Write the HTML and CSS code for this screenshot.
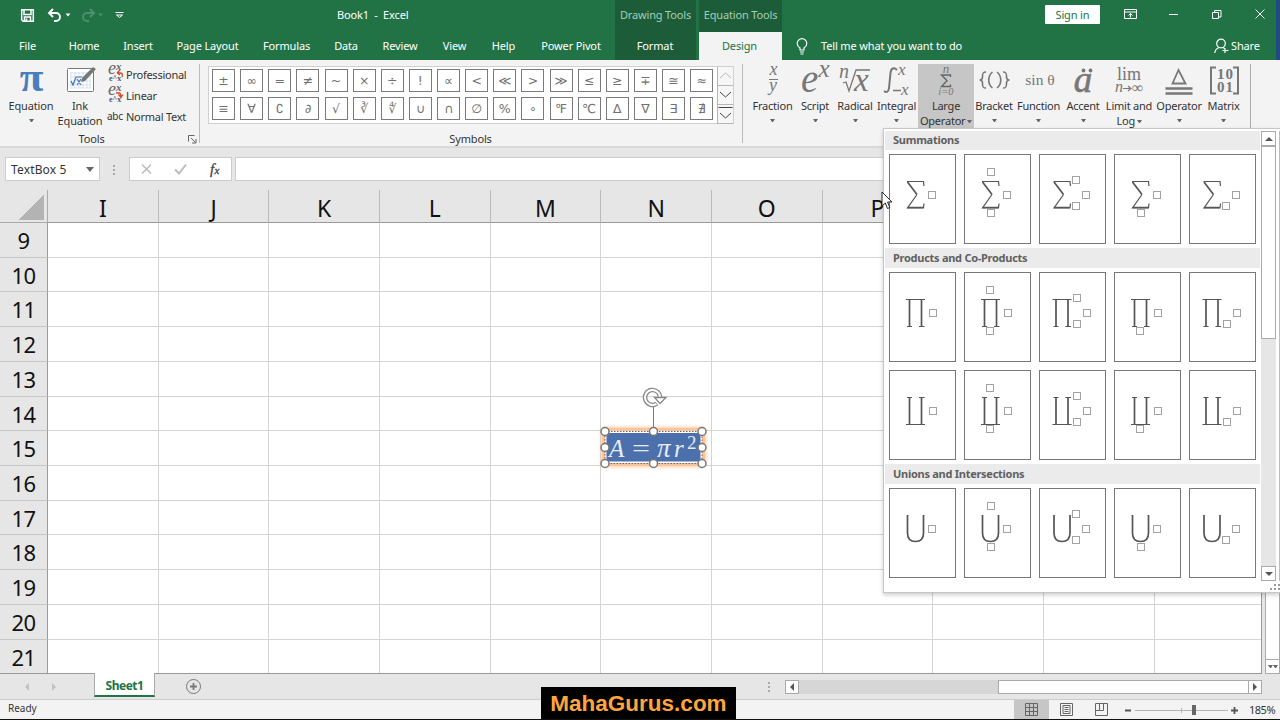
FILE: index.html
```
<!DOCTYPE html>
<html lang="en">
    <head>
        <meta charset="UTF-8" />
        <meta name="viewport" content="width=device-width, initial-scale=1.0" />
        <title>Book1 - Excel</title>
        <link rel="stylesheet" href="styles.css">
    </head>
    <body>
        <div class="app">
            <div class="title-bar">
                <div class="quick-access">
                    <svg width="100" height="20" viewBox="0 0 100 20" fill="none" stroke="#fff">
                        <path d="M1.7 4.7h11.6v11.6H3.2L1.7 14.8zM4 5v4.5h7V5M4.5 16v-4h6v4M6.5 16v-2.500" stroke-width="1.5" />
                        <path d="M33 4l-4 4 4 4M29.500 8H36a4 4 0 0 1 0 8h-2" stroke-width="1.9" />
                        <path d="M45.500 8.500h5l-2.500 3z" fill="#fff" stroke="none" />
                        <g opacity=".2">
                            <path d="M70 4l4 4-4 4M73.500 8H67a4 4 0 0 0 0 8h2" stroke-width="1.9" />
                            <path d="M78 8.500h5l-2.500 3z" fill="#fff" stroke="none" />
                        </g>
                    </svg>
                    <svg class="customize" width="9" height="8" viewBox="0 0 9 8" fill="none" stroke="#fff">
                        <path d="M.5 1.500h8M1.500 4l3 2.500 3-2.500z" />
                    </svg>
                </div>
                <div class="doc-title">Book1&nbsp; -&nbsp; Excel</div>
                <div class="context-title drawing">Drawing Tools</div>
                <div class="context-title equation">Equation Tools</div>
                <div class="window-controls">
                    <button class="sign-in">Sign in</button>
                    <svg width="150" height="20" viewBox="0 0 150 20" fill="none" stroke="#fff">
                        <path d="M5.500 4.500h12v9h-12zM5.500 7h12M11.500 12.500V8.500M9.500 10.500l2-2 2 2" />
                        <path d="M50 9.500h9" />
                        <path d="M93.500 7.500h6v6h-6zM95.500 7V5.500h6.500V12h-2" />
                        <path d="M136.500 4.500l9 9M145.500 4.500l-9 9" />
                    </svg>
                </div>
            </div>

            <div class="tabs">
                <div class="tab file">File</div>
                <div class="tab home">Home</div>
                <div class="tab insert">Insert</div>
                <div class="tab layout">Page Layout</div>
                <div class="tab formulas">Formulas</div>
                <div class="tab data">Data</div>
                <div class="tab review">Review</div>
                <div class="tab view">View</div>
                <div class="tab help">Help</div>
                <div class="tab pivot">Power Pivot</div>
                <div class="tab format">Format</div>
                <div class="tab design">Design</div>
                <div class="tell-me">
                    <svg width="12" height="17" viewBox="0 0 12 17" fill="none" stroke="#fff" stroke-width="1.2">
                        <path d="M4 12v-2C2.500 9 1.200 7.500 1.200 5.500a4.800 4.800 0 0 1 9.600 0C10.800 7.500 9.500 9 8 10v2zM4 14h4M4.500 16h3" />
                    </svg>
                    <span>Tell me what you want to do</span>
                </div>
                <div class="share">
                    <svg width="15" height="16" viewBox="0 0 15 16" fill="none" stroke="#fff" stroke-width="1.2">
                        <circle cx="7" cy="5.500" r="4.300" />
                        <path d="M.8 15c.2-3 2-4.500 4-5.500M9 9.500l1.500 1M11 10v5M8.500 12.500h6" />
                    </svg>
                    <span>Share</span>
                </div>
            </div>

            <div class="ribbon">
                <div class="tools-group">
                    <div class="tools">
                        <div class="big-button equation-button">
                            <svg width="36" height="32" viewBox="0 0 36 32">
                                <text x="18.500" y="27" text-anchor="middle" class="pi">π</text>
                            </svg>
                            <span>Equation</span>
                            <i class="caret"></i>
                        </div>
                        <div class="big-button ink-button">
                            <svg width="36" height="32" viewBox="0 0 36 32" fill="none">
                                <rect x="5.500" y="4.500" width="26" height="23" rx="1" fill="#fff" stroke="#777" />
                                <path d="M9 8v16M13 8v16M17 8v16M21 8v16M25 8v16M28 8v16M8 9h21M8 13h21M8 17h21M8 21h21M8 24h21" stroke="#c9d8ec" stroke-width=".7" />
                                <path d="M9 17l2 4 3-8h6M15 15l4 6M19 15l-4 6" stroke="#3d72b8" stroke-width="1.200" />
                                <path d="M19 18l1-4L31 3l3 2-11 12z" fill="#777" />
                            </svg>
                            <span>Ink</span>
                            <span>Equation</span>
                        </div>
                        <div class="small-buttons">
                            <div class="small-button">
                                <svg width="18" height="18" viewBox="0 0 18 18">
                                    <text x="1" y="10" class="e-glyph">e</text>
                                    <text x="9" y="6" class="x-glyph">x</text>
                                    <text x="2" y="17" class="tiny-glyph">e^x</text>
                                    <path d="M10 9l3-3M10 9h3c2 0 3 1 2 4M10 9l3 2" fill="none" stroke="#d04a28" stroke-width="1.300" />
                                </svg>
                                <span>Professional</span>
                            </div>
                            <div class="small-button">
                                <svg width="18" height="18" viewBox="0 0 18 18">
                                    <text x="1" y="10" class="e-glyph">e</text>
                                    <text x="9" y="6" class="x-glyph">x</text>
                                    <text x="2" y="17" class="tiny-glyph">e^x</text>
                                    <path d="M9 8h3q2 0 2 4M11.500 9.500l2.500 3 2-3" fill="none" stroke="#d04a28" stroke-width="1.300" />
                                </svg>
                                <span>Linear</span>
                            </div>
                            <div class="small-button"><span class="abc">abc</span><span>Normal Text</span></div>
                        </div>
                    </div>
                    <div class="group-label">
                        <span>Tools</span>
                        <svg class="launcher" width="9" height="9" viewBox="0 0 9 9" fill="none" stroke="#666">
                            <path d="M.5 6.500v-6h6M3 3l4.500 4.500M8 4v4H4" />
                        </svg>
                    </div>
                </div>
                <div class="symbols-group">
                    <div class="gallery">
                        <div class="symbol-grid" id="symbolGrid"></div>
                        <div class="gallery-scroll">
                            <svg class="dim" width="15" height="18" viewBox="0 0 15 18"><path d="M2 11l5.500-5 5.500 5" /></svg>
                            <svg width="15" height="18" viewBox="0 0 15 18"><path d="M2 6l5.500 5 5.500-5" /></svg>
                            <svg width="15" height="18" viewBox="0 0 15 18"><path d="M.5 2.500h14M2 8l5.500 5L13 8" /></svg>
                        </div>
                    </div>
                    <div class="group-label"><span>Symbols</span></div>
                </div>
                <div class="structures">
                    <div class="structure fraction">
                        <svg width="44" height="34" viewBox="0 0 44 34">
                            <text x="22.500" y="11" font-size="18" text-anchor="middle" class="math">x</text>
                            <path d="M18 15.500h9" stroke="#777" />
                            <text x="22" y="27" font-size="18" text-anchor="middle" class="math">y</text>
                        </svg>
                        <span>Fraction</span><i class="caret"></i>
                    </div>
                    <div class="structure script">
                        <svg width="44" height="34" viewBox="0 0 44 34">
                            <text x="8" y="28" font-size="39" class="math">e</text>
                            <text x="25.500" y="13" font-size="25" class="math">x</text>
                        </svg>
                        <span>Script</span><i class="caret"></i>
                    </div>
                    <div class="structure radical">
                        <svg width="44" height="34" viewBox="0 0 44 34">
                            <text x="6" y="14" font-size="20" class="math">n</text>
                            <text x="21" y="27" font-size="33" class="math">x</text>
                            <path d="M10 19l3-1 3 9 7-21h14" fill="none" stroke="#777" stroke-width="1.300" />
                        </svg>
                        <span>Radical</span><i class="caret"></i>
                    </div>
                    <div class="structure integral">
                        <svg width="44" height="34" viewBox="0 0 44 34">
                            <path d="M22 6c-3-3-6-2-6.500 3L14 24c-.5 4-2.500 5-5 3" fill="none" stroke="#777" stroke-width="2" />
                            <text x="23" y="11" font-size="17" class="math">x</text>
                            <path d="M18 26.500h8" stroke="#777" stroke-width="1.500" />
                            <text x="26" y="31" font-size="17" class="math">x</text>
                        </svg>
                        <span>Integral</span><i class="caret"></i>
                    </div>
                    <div class="structure large-operator active">
                        <svg width="44" height="34" viewBox="0 0 44 34">
                            <text x="22" y="9" font-size="13" text-anchor="middle" class="math">n</text>
                            <path d="M26.500 13v-2H17.500l5.500 5.800-5.500 5.700h9v-2" fill="none" stroke="#666" stroke-width="1.400" />
                            <text x="22" y="31" font-size="10.500" text-anchor="middle" class="math">i=0</text>
                        </svg>
                        <span>Large</span><span>Operator <i class="caret inline"></i></span>
                    </div>
                    <div class="structure bracket">
                        <svg width="44" height="34" viewBox="0 0 44 34" fill="none" stroke="#777" stroke-width="1.600">
                            <path d="M14 8c-3 0-3.500 1-3.500 4v1c0 2-1 3-3 3 2 0 3 1 3 3v1c0 3 .5 4 3.500 4M31 8c3 0 3.500 1 3.500 4v1c0 2 1 3 3 3-2 0-3 1-3 3v1c0 3-.5 4-3.500 4M20.500 8c-5 4-5 12 0 16M25 8c5 4 5 12 0 16" />
                        </svg>
                        <span>Bracket</span><i class="caret"></i>
                    </div>
                    <div class="structure function">
                        <svg width="44" height="34" viewBox="0 0 44 34">
                            <text x="23" y="21" font-size="15.500" text-anchor="middle" class="upright">sin θ</text>
                        </svg>
                        <span>Function</span><i class="caret"></i>
                    </div>
                    <div class="structure accent">
                        <svg width="44" height="34" viewBox="0 0 44 34">
                            <text x="22" y="28" font-size="37" text-anchor="middle" class="math thick">a</text>
                            <circle cx="22.500" cy="6.500" r="1.900" fill="#777" />
                            <circle cx="29.500" cy="6.500" r="1.900" fill="#777" />
                        </svg>
                        <span>Accent</span><i class="caret"></i>
                    </div>
                    <div class="structure limit">
                        <svg width="44" height="34" viewBox="0 0 44 34">
                            <text x="22" y="16" font-size="18" text-anchor="middle" class="upright">lim</text>
                            <text x="8" y="28" font-size="16" class="math">n</text>
                            <path d="M16 24.500h8M21 22l3 2.500-3 2.500" fill="none" stroke="#777" stroke-width="1.200" />
                            <text x="25" y="29" font-size="16" class="upright">∞</text>
                        </svg>
                        <span>Limit and</span><span>Log <i class="caret inline"></i></span>
                    </div>
                    <div class="structure operator">
                        <svg width="44" height="34" viewBox="0 0 44 34" fill="none" stroke="#777">
                            <path d="M15.500 19.500L21.500 6l7 13.500z" stroke-width="1.800" />
                            <path d="M8.500 24.500h27M8.500 29.500h27" stroke-width="2.500" />
                        </svg>
                        <span>Operator</span><i class="caret"></i>
                    </div>
                    <div class="structure matrix">
                        <svg width="44" height="34" viewBox="0 0 44 34">
                            <path d="M14 3.500H9v26h5M31 3.500h5v26h-5" fill="none" stroke="#777" stroke-width="2" />
                            <text x="15" y="15" font-size="15" class="upright bold">1</text>
                            <text x="23.500" y="15" font-size="15" class="upright bold">0</text>
                            <text x="15" y="27.500" font-size="15" class="upright bold">0</text>
                            <text x="23.500" y="27.500" font-size="15" class="upright bold">1</text>
                        </svg>
                        <span>Matrix</span><i class="caret"></i>
                    </div>
                </div>
            </div>

            <div class="formula-bar">
                <div class="name-box"><span>TextBox 5</span><i class="caret wide"></i></div>
                <div class="dots"><i></i><i></i><i></i></div>
                <div class="formula-buttons">
                    <svg width="100" height="22" viewBox="0 0 100 22" fill="none">
                        <path d="M12 6.500l9 9M21 6.500l-9 9" stroke="#bbb" stroke-width="1.500" />
                        <path d="M45 11.500l4 4 7-9" stroke="#bbb" stroke-width="2" />
                        <text x="80" y="15.500" font-size="15" class="math dark">f</text>
                        <text x="84.500" y="16" font-size="11" class="math dark">x</text>
                    </svg>
                </div>
                <div class="formula-input"></div>
            </div>

            <div class="sheet-area">
                <div class="sheet" id="sheet"></div>
                <div class="sheet-scroll"><div class="scroll-end"><i class="caret"></i><i class="caret"></i></div></div>
            </div>

            <div class="sheet-tabs">
                <div class="sheet-nav"><i class="arrow left"></i><i class="arrow right"></i></div>
                <div class="sheet-tab">Sheet1</div>
                <svg class="add-sheet" width="17" height="17" viewBox="0 0 17 17" fill="none" stroke="#777">
                    <circle cx="8.500" cy="8.500" r="7" />
                    <path d="M8.500 5v7M5 8.500h7" stroke-width="1.800" />
                </svg>
                <div class="dots"><i></i><i></i><i></i></div>
                <div class="h-scroll">
                    <div class="h-button"><i class="arrow left"></i></div>
                    <div class="h-thumb"></div>
                    <div class="h-button"><i class="arrow right"></i></div>
                </div>
            </div>

            <div class="status-bar">
                <span class="ready">Ready</span>
                <div class="view-buttons">
                    <div class="view-button on">
                        <svg width="13" height="13" viewBox="0 0 13 13"><path d="M.5.5h12v12H.5zM4.500.5v12M8.500.5v12M.5 4.500h12M.5 8.500h12" /></svg>
                    </div>
                    <div class="view-button">
                        <svg width="13" height="13" viewBox="0 0 13 13"><path d="M.5.5h12v12H.5zM3 2.500h7v8H3zM4.500 4.500h4M4.500 6.500h4M4.500 8.500h4" /></svg>
                    </div>
                    <div class="view-button">
                        <svg width="13" height="13" viewBox="0 0 13 13"><path d="M.5.5h12v12H.5zM4.500.5v7M8.500.5v7M.5 7.500h8" /></svg>
                    </div>
                </div>
                <svg class="zoom-slider" width="116" height="14" viewBox="0 0 116 14" fill="none">
                    <path d="M2 7.500h6" stroke="#555" stroke-width="2" />
                    <path d="M12 7.500h93M58.500 5v5" stroke="#b5b5b5" />
                    <path d="M71 2v10" stroke="#666" stroke-width="4" />
                    <path d="M108 7.500h7M111.500 4v7" stroke="#555" stroke-width="1.800" />
                </svg>
                <span class="zoom-level">185%</span>
            </div>

            <div class="equation-box">
                <svg width="110" height="90" viewBox="0 0 110 90">
                    <path d="M56.500 27v20" stroke="#777" />
                    <path d="M60 23.500A7.500 7.500 0 1 1 63 18" fill="none" stroke="#888" stroke-width="4.500" />
                    <path d="M59.500 23.800A7.500 7.500 0 1 1 63 18" fill="none" stroke="#fff" stroke-width="2" />
                    <path d="M57.500 17.500h11.500l-6 6z" fill="#fff" stroke="#888" stroke-width="1.300" />
                    <rect class="glow" x="5" y="48" width="103" height="38" rx="3" />
                    <rect x="8" y="51" width="97" height="32" fill="#fff" />
                    <rect x="9.500" y="53" width="94" height="28.500" fill="#4c70ab" />
                    <rect x="8" y="51.500" width="97" height="32" fill="none" stroke="#666" stroke-dasharray="1.500 1.500" />
                    <g class="formula" font-size="25">
                        <text x="12" y="77">A</text>
                        <text x="35" y="77" class="plain" textLength="18" lengthAdjust="spacingAndGlyphs">=</text>
                        <text x="60" y="77" font-size="27">π</text>
                        <text x="77" y="77">r</text>
                        <text x="90" y="69" font-size="19" class="plain">2</text>
                    </g>
                    <g fill="#fff" stroke="#777" stroke-width="1.500">
                        <circle cx="8" cy="51.500" r="4" /><circle cx="56.500" cy="51.500" r="4" /><circle cx="105" cy="51.500" r="4" />
                        <circle cx="8" cy="67.500" r="4" /><circle cx="105" cy="67.500" r="4" />
                        <circle cx="8" cy="83.500" r="4" /><circle cx="56.500" cy="83.500" r="4" /><circle cx="105" cy="83.500" r="4" />
                    </g>
                </svg>
            </div>

            <div class="operator-menu">
                <div class="menu-body">
                    <div class="menu-list">
                        <div class="menu-heading">Summations</div>
                        <div class="menu-row" data-operator="sum"></div>
                        <div class="menu-heading">Products and Co-Products</div>
                        <div class="menu-row" data-operator="prod"></div>
                        <div class="menu-row second" data-operator="coprod"></div>
                        <div class="menu-heading">Unions and Intersections</div>
                        <div class="menu-row" data-operator="union"></div>
                    </div>
                    <div class="menu-scroll">
                        <div class="menu-button"><i class="arrow up"></i></div>
                        <div class="menu-thumb"></div>
                        <div class="menu-button last"><i class="arrow down"></i></div>
                    </div>
                    <div class="menu-edge"></div>
                </div>
                <svg class="grip" width="14" height="8" viewBox="0 0 14 8" fill="#999">
                    <path d="M8 0h2v2H8zM12 0h2v2h-2zM4 4h2v2H4zM8 4h2v2H8zM12 4h2v2h-2z" />
                </svg>
            </div>

            <svg class="pointer" width="13" height="20" viewBox="0 0 13 20">
                <path d="M1 1v14l3.300-3 2.200 5.500 2.300-1L6.600 11H11z" fill="#fff" stroke="#222" />
            </svg>
            <div class="watermark">MahaGurus.com</div>
        </div>

        <script>
            const symbols = "± ∞ = ≠ ~ × ÷ ! ∝ < ≪ > ≫ ≤ ≥ ∓ ≅ ≈ ≡ ∀ ∁ ∂ √ ∛ ∜ ∪ ∩ ∅ % ∘ ℉ ℃ ∆ ∇ ∃ ∄".split(" ");
            const columns = ["I", "J", "K", "L", "M", "N", "O", "P", "Q", "R", "S"];

            // Thin outline, heavier strokes and placeholder offset for each operator
            const operators = {
                sum: { path: "M35 32l-.5-4.500H18M28 40.500L18.500 54h16l.5-4.500", heavy: "M18.500 28L28 40.500M18.500 53.500H34", shift: 0 },
                prod: { path: "M17 27.500h19M18 54.500h5M30 54.500h5.500", heavy: "M20.500 27.500v27M32.500 27.500v27", shift: 1 },
                coprod: { path: "M18 27.500h5M30 27.500h5.500M17 54.500h19", heavy: "M20.500 27.500v27M32.500 27.500v27", shift: 1 },
                union: { path: "", heavy: "M18.500 27v18c0 6 3 8.500 8 8.500s8-2.500 8-8.500V27", shift: 0 },
            };

            // Each layout: glyph offset, then the placeholder squares
            const layouts = [
                { dx: 0, boxes: [[39, 37]] },
                { dx: 0, boxes: [[39, 37], [23, 14], [23, 55]] },
                { dx: -3.5, boxes: [[43, 37], [33, 22], [33, 48]] },
                { dx: 0, boxes: [[39, 37], [23, 55]] },
                { dx: -3.5, boxes: [[43, 37], [33, 48]] },
            ];

            function buildSymbols() {
                const grid = document.getElementById("symbolGrid");
                symbols.forEach((symbol) => {
                    const cell = document.createElement("div");
                    cell.className = "symbol";
                    cell.textContent = symbol;
                    grid.appendChild(cell);
                });
            }

            function buildSheet() {
                let html = '<div class="corner"></div>';
                columns.forEach((name) => (html += `<div class="column-head">${name}</div>`));
                for (let row = 9; row <= 21; row++) {
                    html += `<div class="row-head">${row}</div>`;
                    columns.forEach(() => (html += '<div class="cell"></div>'));
                }
                document.getElementById("sheet").innerHTML = html;
            }

            function buildMenu() {
                document.querySelectorAll(".menu-row").forEach((row) => {
                    const op = operators[row.dataset.operator];
                    row.innerHTML = layouts
                        .map((layout) => {
                            const boxes = layout.boxes
                                .map(([x, y]) => {
                                    const shift = x === 23 ? -op.shift : op.shift;
                                    return `<rect x="${x + shift - 0.5}" y="${y - 0.5}" width="7" height="7" />`;
                                })
                                .join("");
                            return `<svg class="menu-item" width="67" height="90" viewBox="0 0 65 88">
                                <g transform="translate(${layout.dx - 1} -1)"><path d="${op.path}" />
                                <path class="heavy" d="${op.heavy}" /></g>${boxes}</svg>`;
                        })
                        .join("");
                });
            }

            buildSymbols();
            buildSheet();
            buildMenu();
        </script>
    </body>
</html>
```
FILE: styles.css
```
* {
    margin: 0;
    padding: 0;
    box-sizing: border-box;
}
body {
    font-family: "Noto Sans", "Open Sans", sans-serif;
    font-size: 11px;
    letter-spacing: -0.15px;
    color: #333;
    overflow: hidden;
}
svg {
    display: block;
    flex: none;
    overflow: visible;
    letter-spacing: 0;
}

.app {
    position: relative;
    display: flex;
    flex-direction: column;
    width: 1280px;
    height: 720px;
    overflow: hidden;
    background: #e6e6e6;
    border-bottom: 1px solid #111;
}
.app > div {
    flex: none;
}

/* Title bar and tabs */
.title-bar {
    display: flex;
    height: 32px;
    background: #217346;
    border-right: 4px solid #214a80;
    color: #fff;
    line-height: 30px;
    white-space: nowrap;
}
.quick-access {
    display: flex;
    width: 337px;
    padding: 5px 0 0 20px;
}
.customize {
    margin: 6px 0 0 -5px;
}
.doc-title {
    width: 278px;
}
.context-title {
    background: #1c5c39;
    color: #a3cfb6;
    text-align: center;
}
.context-title.drawing {
    width: 81px;
    margin-right: 3px;
}
.context-title.equation {
    width: 83px;
}
.window-controls {
    display: flex;
    gap: 19px;
    padding: 5px 0 0 263px;
}
.sign-in {
    width: 55px;
    height: 19px;
    border: none;
    border-radius: 1px;
    background: #fff;
    color: #217346;
    font: inherit;
    letter-spacing: inherit;
    line-height: 19px;
}
.tabs {
    display: flex;
    height: 28px;
    background: #217346;
    border-right: 4px solid #214a80;
    color: #fff;
    line-height: 27px;
    white-space: nowrap;
}
.tab {
    text-align: center;
}
.file { width: 55px; }
.home { width: 58px; }
.insert { width: 50px; }
.layout { width: 89px; }
.formulas { width: 69px; }
.data { width: 50px; }
.review { width: 58px; }
.view { width: 51px; }
.help { width: 47px; }
.pivot { width: 88px; }
.format {
    width: 81px;
    margin-right: 3px;
    padding-right: 1px;
    background: #1c5c39;
}
.design {
    width: 83px;
    padding-right: 2px;
    background: #f3f3f3;
    color: #217346;
}
.tell-me {
    display: flex;
    gap: 13px;
    width: 432px;
    padding-left: 14px;
}
.tell-me svg,
.share svg {
    margin-top: 6px;
}
.share {
    display: flex;
    gap: 2px;
}

/* Ribbon */
.ribbon {
    display: flex;
    height: 88px;
    padding-top: 4px;
    background: #f3f3f3;
    border-bottom: 2px solid #d9d9d9;
    line-height: 15px;
    white-space: nowrap;
}
.tools-group {
    width: 200px;
    height: 79px;
    border-right: 1px solid #bbb;
}
.tools {
    display: flex;
    height: 67px;
}
.big-button {
    display: flex;
    flex-direction: column;
    align-items: center;
}
.big-button svg {
    margin-bottom: 2px;
}
.equation-button {
    width: 62px;
}
.ink-button {
    width: 36px;
}
.pi {
    font: bold 43px "Liberation Serif", serif;
    fill: #4a7ebb;
}
.caret {
    display: block;
    width: 5px;
    margin: 6px auto 0;
    border: 2.5px solid transparent;
    border-top: 3px solid #666;
    border-bottom: none;
}
.caret.inline {
    display: inline-block;
    margin: 0 0 0 -1px;
    vertical-align: 2px;
}
.caret.wide {
    margin: 0;
    border-width: 5px 4px 0;
}
.small-buttons {
    padding-left: 9px;
}
.small-button {
    display: flex;
    align-items: center;
    gap: 1px;
    height: 21.5px;
    margin-top: -0.5px;
    letter-spacing: -0.25px;
}
.small-button svg {
    margin: -2px 0 0;
}
.e-glyph {
    font: italic 18px "Liberation Serif", serif;
    fill: #666;
}
.x-glyph {
    font: italic bold 11px "Liberation Serif", serif;
    fill: #666;
}
.tiny-glyph {
    font: bold 8px "Liberation Serif", serif;
    fill: #555;
}
.abc {
    width: 18px;
    font-size: 10px;
}
.group-label {
    position: relative;
    height: 16px;
    text-align: center;
}
.tools-group .group-label {
    padding-right: 16px;
}
.launcher {
    position: absolute;
    top: 4px;
    right: 2px;
}
.symbols-group {
    width: 543px;
    height: 79px;
    padding: 2px 9px 0 8px;
    border-right: 1px solid #bbb;
}
.gallery {
    display: flex;
    width: 526px;
    height: 58px;
    margin-bottom: 7px;
    border: 1px solid #d0d0d0;
    background: #fff;
}
.symbol-grid {
    display: grid;
    grid-template-columns: repeat(18, 28.13px);
    grid-template-rows: 28px 28px;
    width: 508px;
    padding: 2px 0 0 3px;
}
.symbol {
    width: 23px;
    height: 23px;
    border: 1px solid #7a7a7a;
    color: #707070;
    font: 12.5px/21px "DejaVu Sans", sans-serif;
    letter-spacing: 0;
    text-align: center;
}
.gallery-scroll {
    display: flex;
    flex-direction: column;
    width: 16px;
    background: #f6f6f6;
}
.gallery-scroll svg {
    width: 16px;
    height: 19px;
    border: 1px solid #b5b5b5;
    border-width: 0 0 1px 1px;
    fill: none;
    stroke: #444;
}
.gallery-scroll .dim {
    stroke: #bbb;
}
.structures {
    display: flex;
    width: 508px;
    height: 79px;
    padding-left: 7px;
    border-right: 1px solid #aaa;
}
.structure {
    display: flex;
    flex-direction: column;
    align-items: center;
    height: 64px;
}
.fraction { width: 45px; }
.script, .radical { width: 40px; }
.integral { width: 43px; }
.large-operator { width: 56px; }
.bracket { width: 40px; }
.function { width: 49px; }
.accent { width: 40px; }
.limit { width: 52px; }
.operator { width: 48px; }
.matrix { width: 41px; }
.structure.active {
    background: #c6c6c6;
}
.structure span {
    letter-spacing: -0.22px;
}
.math {
    font-family: "Liberation Serif", serif;
    font-style: italic;
    fill: #777;
}
.math.thick {
    stroke: #777;
    stroke-width: 0.6;
}
.math.dark {
    fill: #444;
    stroke: #444;
    stroke-width: 0.3;
}
.upright {
    font-family: "Liberation Serif", serif;
    fill: #777;
}
.bold {
    font-weight: bold;
}

/* Formula bar */
.formula-bar {
    display: flex;
    height: 42px;
    padding: 9px 0 8px 5px;
}
.name-box {
    display: flex;
    align-items: center;
    justify-content: space-between;
    width: 95px;
    height: 24px;
    padding: 0 5px;
    border: 1px solid #ccc;
    background: #fff;
    font-size: 12px;
    letter-spacing: 0.15px;
}
.dots {
    display: flex;
    flex-direction: column;
    justify-content: center;
    gap: 2px;
    width: 2px;
}
.dots i {
    width: 2px;
    height: 2px;
    background: #aaa;
}
.formula-bar .dots {
    margin: 0 14px 0 13px;
}
.formula-buttons {
    width: 103px;
    height: 24px;
    margin-right: 3px;
    border: 1px solid #ccc;
    background: #fff;
}
.formula-input {
    flex: 1;
    height: 24px;
    border: 1px solid #ccc;
    background: #fff;
}

/* Sheet */
.sheet-area {
    display: flex;
    height: 484px;
}
.sheet {
    display: grid;
    grid-template-columns: 48px repeat(11, 110.67px);
    grid-template-rows: 33px repeat(13, 34.73px);
    width: 1262px;
    overflow: hidden;
    border-right: 1px solid #999;
    border-bottom: 1px solid #999;
    color: #111;
    font-size: 23px;
    text-align: center;
}
.corner {
    border-right: 1px solid #aaa;
    border-bottom: 1px solid #aaa;
    background: linear-gradient(135deg, transparent 50%, #b3b3b3 50%) 19px 5px / 25px 25px no-repeat;
}
.column-head {
    border-right: 1px solid #bbb;
    border-bottom: 1px solid #999;
    line-height: 37px;
}
.row-head {
    border-right: 1px solid #999;
    border-bottom: 1px solid #c6c6c6;
    font-size: 22px;
    letter-spacing: -0.5px;
    line-height: 34px;
}
.cell {
    border-right: 1px solid #d4d4d4;
    border-bottom: 1px solid #d4d4d4;
    background: #fff;
}
.sheet-scroll {
    display: flex;
    flex-direction: column;
    justify-content: flex-end;
    width: 15px;
    margin-left: 3px;
    border: 1px solid #aaa;
    background: #fff;
}
.scroll-end {
    display: flex;
    height: 14px;
    padding-left: 2px;
    border-top: 1px solid #aaa;
}
.scroll-end .caret {
    margin: 5px 0 0;
}

/* Sheet tabs */
.sheet-tabs {
    display: flex;
    height: 26px;
    border-bottom: 1px solid #ccc;
}
.arrow {
    width: 0;
    height: 0;
    border: 4px solid transparent;
}
.arrow.left {
    border-left: none;
    border-right-color: #555;
}
.arrow.right {
    border-right: none;
    border-left-color: #555;
}
.arrow.up {
    border-top: none;
    border-bottom-color: #555;
}
.arrow.down {
    border-bottom: none;
    border-top-color: #555;
}
.sheet-nav {
    display: flex;
    align-items: center;
    gap: 23px;
    width: 94px;
    padding-left: 25px;
}
.sheet-nav .arrow.left {
    border-right-color: #c2c2c2;
}
.sheet-nav .arrow.right {
    border-left-color: #c2c2c2;
}
.sheet-tab {
    width: 61px;
    height: 24px;
    margin-top: -1px;
    border: 1px solid #aaa;
    border-width: 0 1px 2px;
    border-bottom-color: #217346;
    background: #fff;
    color: #217346;
    font-size: 12px;
    font-weight: bold;
    letter-spacing: -0.5px;
    line-height: 25px;
    text-align: center;
}
.add-sheet {
    margin: 4px 0 0 30px;
}
.sheet-tabs .dots {
    margin-left: 566px;
}
.h-scroll {
    display: flex;
    width: 477px;
    height: 14px;
    margin: 6px 0 0 15px;
    background: #d6d6d6;
}
.h-button {
    display: flex;
    align-items: center;
    justify-content: center;
    width: 14px;
    border: 1px solid #aaa;
    background: #fff;
}
.h-thumb {
    width: 250px;
    margin-left: auto;
    border: 1px solid #aaa;
    border-right: none;
    background: #fff;
}

/* Status bar */
.status-bar {
    display: flex;
    align-items: center;
    height: 19px;
    background: #f3f3f3;
    font-size: 10px;
    line-height: 17px;
}
.ready {
    width: 1014px;
    padding: 0 0 2px 8px;
    letter-spacing: 0;
}
.view-buttons {
    display: flex;
}
.view-button {
    display: flex;
    align-items: center;
    justify-content: center;
    width: 35px;
    height: 19px;
}
.view-button.on {
    background: #c6c6c6;
}
.view-button svg {
    fill: none;
    stroke: #666;
}
.zoom-slider {
    margin-left: 4px;
}
.zoom-level {
    margin-left: 10px;
    padding-bottom: 1px;
    font-size: 11px;
    letter-spacing: -0.5px;
}

/* Text box lying on the sheet */
.equation-box {
    position: absolute;
    left: 597px;
    top: 380px;
}
.glow {
    fill: #fbc59c;
    filter: drop-shadow(0 0 2px #fbb27c);
}
.formula {
    font-family: "Liberation Serif", serif;
    font-style: italic;
    fill: #e4ecf8;
}
.formula .plain {
    font-style: normal;
}

/* Large operator menu */
.operator-menu {
    position: absolute;
    left: 883px;
    top: 128px;
    width: 397px;
    height: 465px;
    padding: 2px 0 0 1px;
    border: 1px solid #c6c6c6;
    border-right: none;
    background: #fff;
    box-shadow: 0 2px 4px rgba(0, 0, 0, 0.2);
}
.menu-body {
    display: flex;
    height: 450px;
}
.menu-list {
    width: 375px;
}
.menu-heading {
    height: 20px;
    margin-top: 4px;
    padding-left: 8px;
    background: #ebebeb;
    color: #606060;
    font-weight: bold;
    letter-spacing: -0.27px;
    line-height: 20px;
}
.menu-heading:first-child {
    height: 19px;
    margin-top: 0;
    line-height: 18px;
}
.menu-row {
    display: flex;
    gap: 8px;
    padding: 4px 0 0 4px;
}
.menu-row.second {
    padding-top: 8px;
}
.menu-item {
    border: 1px solid #777;
    fill: none;
    stroke: #555;
    stroke-width: 1.2;
}
.menu-item .heavy {
    stroke-width: 1.7;
}
.menu-item rect {
    stroke: #444;
    stroke-width: 1;
    stroke-dasharray: 1 1;
}
.menu-scroll {
    display: flex;
    flex-direction: column;
    width: 15px;
    margin-left: 1px;
    background: #e6e6e6;
}
.menu-button {
    display: flex;
    align-items: center;
    justify-content: center;
    height: 15px;
    border: 1px solid #aaa;
    background: #fff;
}
.menu-button.last {
    margin-top: auto;
}
.menu-thumb {
    height: 193px;
    border: 1px solid #aaa;
    background: #fff;
}
.menu-edge {
    width: 4px;
    border-right: 1px solid #dcb0b0;
}
.grip {
    margin: 3px 0 0 381px;
}

.pointer {
    position: absolute;
    left: 881px;
    top: 191px;
}
.watermark {
    position: absolute;
    left: 541px;
    top: 687px;
    width: 195px;
    height: 32px;
    background: #000;
    color: #ffa540;
    font: bold 22.5px/33px "Liberation Sans", sans-serif;
    letter-spacing: 0;
    text-align: center;
}
```
